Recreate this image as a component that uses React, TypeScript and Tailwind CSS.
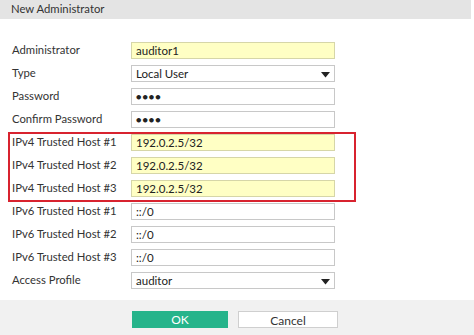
import { ReactNode } from 'react';

const yellow = 'bg-[#ffffc4] border-[#d6d6a8]';
const plain = 'bg-white border-[#c8c8c8]';

function Caret() {
  return (
    <svg width="9" height="6" viewBox="0 0 9 6" className="absolute right-[4px] top-[6px]">
      <path d="M0 0h9L4.5 5.5z" fill="#222" />
    </svg>
  );
}

function Row({ label, children }: { label: string; children: ReactNode }) {
  return (
    <div className="flex h-[23px] items-center">
      <div className="w-[119px] shrink-0 text-[11.3px] text-[#333]">{label}</div>
      {children}
    </div>
  );
}

function Field({ value, hi, select, dots }: { value: string; hi?: boolean; select?: boolean; dots?: boolean }) {
  return (
    <div
      className={`relative flex h-[17px] w-[204px] items-center border px-[4px] text-[11.5px] text-[#222] ${hi ? yellow : plain}`}
    >
      {dots ? <span className="text-[9px] tracking-[1px] font-bold">●●●●</span> : value}
      {select && <Caret />}
    </div>
  );
}

export default function App() {
  const v4 = ['IPv4 Trusted Host #1', 'IPv4 Trusted Host #2', 'IPv4 Trusted Host #3'];
  const v6 = ['IPv6 Trusted Host #1', 'IPv6 Trusted Host #2', 'IPv6 Trusted Host #3'];

  return (
    <div className="h-[335px] w-[474px] overflow-hidden bg-white font-['Lato','Liberation_Sans',sans-serif]">
      <div className="flex h-[19px] w-[471px] items-center bg-[#e4e4e4] pl-[11px] text-[11.3px] text-[#333]">
        New Administrator
      </div>

      <div className="px-[12px] pt-[20px]">
        <Row label="Administrator">
          <Field value="auditor1" hi />
        </Row>
        <Row label="Type">
          <Field value="Local User" select />
        </Row>
        <Row label="Password">
          <Field value="" dots />
        </Row>
        <Row label="Confirm Password">
          <Field value="" dots />
        </Row>

        <div className="relative">
          {v4.map((l) => (
            <Row key={l} label={l}>
              <Field value="192.0.2.5/32" hi />
            </Row>
          ))}
          {/* highlight annotation */}
          <span className="pointer-events-none absolute -left-[4px] right-[106px] top-[1px] -bottom-[2px] border-2 border-[#d8232f]" />
        </div>

        {v6.map((l) => (
          <Row key={l} label={l}>
            <Field value="::/0" />
          </Row>
        ))}
        <Row label="Access Profile">
          <Field value="auditor" select />
        </Row>
      </div>

      <div className="mt-[8px] flex h-[35px] gap-[10px] bg-[#f1f1f1] pl-[132px] pt-[11px]">
        <button className="h-[17px] w-[96px] bg-[#26b48b] text-[12px] text-white">OK</button>
        <button className="h-[17px] w-[100px] border border-[#cfcfcf] bg-white text-[12px] text-[#333]">
          Cancel
        </button>
      </div>
    </div>
  );
}
